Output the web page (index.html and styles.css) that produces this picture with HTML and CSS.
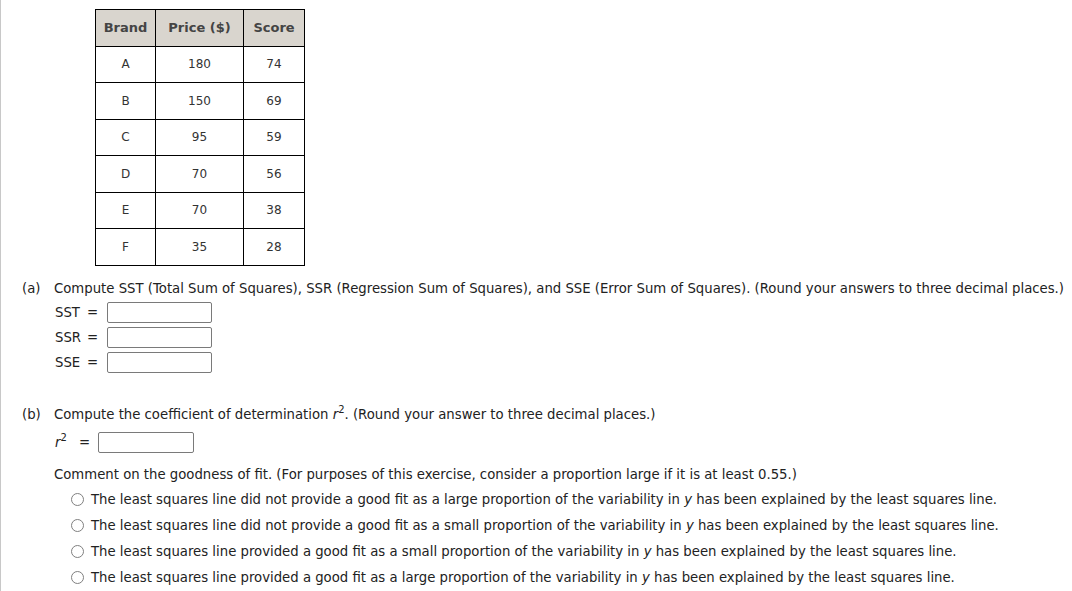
FILE: index.html
```html
<!DOCTYPE html>
<html>
<head>
<meta charset="utf-8">
<link rel="stylesheet" href="styles.css">
</head>
<body>
<div class="page">
  <table class="data">
    <thead>
      <tr><th class="c1">Brand</th><th class="c2">Price ($)</th><th class="c3">Score</th></tr>
    </thead>
    <tbody>
      <tr><td>A</td><td>180</td><td>74</td></tr>
      <tr><td>B</td><td>150</td><td>69</td></tr>
      <tr><td>C</td><td>95</td><td>59</td></tr>
      <tr><td>D</td><td>70</td><td>56</td></tr>
      <tr><td>E</td><td>70</td><td>38</td></tr>
      <tr><td>F</td><td>35</td><td>28</td></tr>
    </tbody>
  </table>

  <div class="part part-a">
    <div class="label">(a)</div>
    <div class="body">
      <div class="prompt">Compute SST (Total Sum of Squares), SSR (Regression Sum of Squares), and SSE (Error Sum of Squares). (Round your answers to three decimal places.)</div>
      <div class="answers">
        <div class="ans"><span class="name">SST</span><span class="eq">=</span><span class="box"></span></div>
        <div class="ans"><span class="name">SSR</span><span class="eq">=</span><span class="box"></span></div>
        <div class="ans"><span class="name">SSE</span><span class="eq">=</span><span class="box"></span></div>
      </div>
    </div>
  </div>

  <div class="part part-b">
    <div class="label">(b)</div>
    <div class="body">
      <div class="prompt">Compute the coefficient of determination <i class="var">r</i><sup>2</sup>. (Round your answer to three decimal places.)</div>
      <div class="ans r2"><span class="name"><i class="var">r</i><sup>2</sup></span><span class="eq">=</span><span class="box box-r2"></span></div>
      <div class="comment">Comment on the goodness of fit. (For purposes of this exercise, consider a proportion large if it is at least 0.55.)</div>
      <ul class="choices">
        <li><span class="radio"></span><span class="opt">The least squares line did not provide a good fit as a large proportion of the variability in <i class="var">y</i> has been explained by the least squares line.</span></li>
        <li><span class="radio"></span><span class="opt">The least squares line did not provide a good fit as a small proportion of the variability in <i class="var">y</i> has been explained by the least squares line.</span></li>
        <li><span class="radio"></span><span class="opt">The least squares line provided a good fit as a small proportion of the variability in <i class="var">y</i> has been explained by the least squares line.</span></li>
        <li><span class="radio"></span><span class="opt">The least squares line provided a good fit as a large proportion of the variability in <i class="var">y</i> has been explained by the least squares line.</span></li>
      </ul>
    </div>
  </div>
</div>
</body>
</html>
```

FILE: styles.css
```css
html, body {
  margin: 0;
  padding: 0;
  background: #fff;
}
body {
  font-family: "DejaVu Sans", Verdana, sans-serif;
  font-size: 13.25px;
  color: #222;
}
.page {
  border-left: 1px solid #c8c8c8;
  min-height: 591px;
  box-sizing: border-box;
  padding-top: 9px;
}
.data {
  margin-left: 94px;
  border-collapse: collapse;
  font-size: 12px;
  color: #333;
}
.data th, .data td {
  border: 1px solid #000;
  text-align: center;
  padding: 0;
  height: 35.5px;
}
.data th {
  background: #d9d5ce;
  font-weight: bold;
  font-size: 13px;
  color: #444;
}
.data .c1 { width: 59px; }
.data .c2 { width: 87px; }
.data .c3 { width: 60px; }

.part {
  display: flex;
}
.label {
  width: 32px;
  padding-left: 21px;
  flex: none;
}
.part-a { margin-top: 15px; }
.part-b { margin-top: 32px; }
.prompt { line-height: 16px; white-space: nowrap; }
.answers { margin-top: 3px; }
.ans {
  display: flex;
  align-items: center;
  height: 25px;
}
.name {
  width: 32px;
  padding-left: 1px;
}
.eq { width: 20px; }
.box {
  display: block;
  width: 103px;
  height: 19px;
  border: 1px solid #7a7a7a;
  border-radius: 2px;
  background: #fff;
}
.r2 { margin-top: 6px; height: 28px; }
.r2 .name { width: 24px; }
.r2 .eq { width: 19px; }
.box-r2 { width: 94px; }
.var { font-family: "DejaVu Sans", Verdana, sans-serif; font-style: italic; }
sup { font-size: 10px; line-height: 0; vertical-align: 6px; }
.comment { margin-top: 10px; line-height: 16px; }
.choices {
  list-style: none;
  margin: 4px 0 0;
  padding: 0 0 0 17px;
}
.choices li {
  display: flex;
  align-items: center;
  height: 26px;
}
.opt { white-space: nowrap; }
.radio {
  width: 11px;
  height: 11px;
  border: 1px solid #808080;
  border-radius: 50%;
  margin-right: 7px;
  flex: none;
}
```
